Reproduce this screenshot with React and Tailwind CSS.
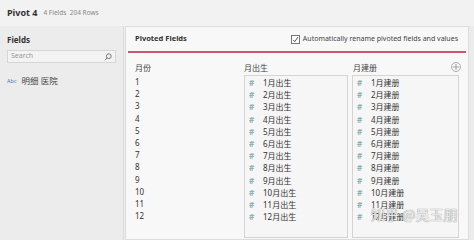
import React from "react";

const months = Array.from({ length: 12 }, (_, i) => i + 1);

function Hash() {
  return (
    <span className="inline-block w-[14px] text-[8px] font-bold text-[#8fb3b4]">#</span>
  );
}

export default function App() {
  return (
    <div
      className="w-[474px] h-[240px] overflow-hidden bg-[#ececec] flex flex-col text-[#333] relative"
      style={{ fontFamily: '"Noto Sans", "Noto Sans CJK SC", sans-serif' }}
    >
      <div className="h-[26px] shrink-0 flex items-center px-[7px] bg-[#f2f2f2] gap-[6px]">
        <span className="text-[9px] font-bold text-[#333]">Pivot 4</span>
        <span className="text-[6.5px] text-[#888]">4 Fields&nbsp;&nbsp;204 Rows</span>
      </div>
      <div className="flex flex-1 min-h-0">
        <div className="w-[124px] shrink-0 border-r border-[#dcdcdc] px-[7px] pt-[8px]">
          <div className="text-[8px] font-bold text-[#333] leading-[12px]">Fields</div>
          <div className="mt-[4px] h-[13px] bg-[#f3f3f3] border border-[#d6d6d6] flex items-center justify-between px-[3px]">
            <span className="text-[7px] text-[#999]">Search</span>
            <svg width="8" height="8" viewBox="0 0 10 10" fill="none" stroke="#666" strokeWidth="1.1">
              <circle cx="6" cy="4" r="3" />
              <path d="M3.8 6.2 L1 9" />
            </svg>
          </div>
          <div className="mt-[12px] flex items-center gap-[5px]">
            <span className="text-[5.5px] text-[#4a7fb5]">Abc</span>
            <span className="text-[8.5px] text-[#444]">明细 医院</span>
          </div>
        </div>
        <div className="flex-1 mr-[5px] ml-[1px] bg-[#f8f8f8] border border-[#dddddd] flex flex-col relative">
          <div className="h-[24px] shrink-0 flex items-center justify-between pl-[9px] pr-[10px]">
            <span className="text-[7.5px] font-bold text-[#333]">Pivoted Fields</span>
            <label className="flex items-center gap-[3px]">
              <span className="w-[9px] h-[9px] border border-[#777] bg-white flex items-center justify-center">
                <svg width="7" height="7" viewBox="0 0 10 10" fill="none" stroke="#444" strokeWidth="1.3">
                  <path d="M1.5 5.5 L4 8 L8.5 1.5" />
                </svg>
              </span>
              <span className="text-[7px] text-[#444]">Automatically rename pivoted fields and values</span>
            </label>
          </div>
          <div className="mx-[2px] h-[2px] bg-[#c65670] shrink-0" />
          <div className="flex flex-1 min-h-0 pl-[9px] pt-[9px] gap-[4px]">
            <div className="w-[105px] flex flex-col">
              <div className="text-[8px] leading-[12px] h-[13px] text-[#444]">月份</div>
              <div className="pt-[1px]">
                {months.map((m) => (
                  <div key={m} className="text-[8px] leading-[12.2px] h-[12.2px] text-[#333]">{m}</div>
                ))}
              </div>
            </div>
            <div className="w-[104px] flex flex-col">
              <div className="text-[8px] leading-[12px] h-[13px] text-[#444]">月出生</div>
              <div className="flex-1 border border-[#d4d4d4] bg-[#f6f6f6] pt-[1px] pl-[4px] mb-[1px]">
                {months.map((m) => (
                  <div key={m} className="flex items-center text-[8px] leading-[12.2px] h-[12.2px] text-[#333]">
                    <Hash />
                    <span>{m}月出生</span>
                  </div>
                ))}
              </div>
            </div>
            <div className="w-[107px] flex flex-col">
              <div className="text-[8px] leading-[12px] h-[13px] text-[#444] pl-[1px]">月建册</div>
              <div className="flex-1 border border-[#d4d4d4] bg-[#f6f6f6] pt-[1px] pl-[4px] mb-[1px]">
                {months.map((m) => (
                  <div key={m} className="flex items-center text-[8px] leading-[12.2px] h-[12.2px] text-[#333]">
                    <Hash />
                    <span>{m}月建册</span>
                  </div>
                ))}
              </div>
            </div>
          </div>
          <div className="absolute right-[7px] top-[35px] w-[10px] h-[10px] rounded-full border border-[#aaa] flex items-center justify-center">
            <svg width="6" height="6" viewBox="0 0 6 6" stroke="#999" strokeWidth="0.9">
              <path d="M3 0 V6 M0 3 H6" />
            </svg>
          </div>
        </div>
      </div>
      <div
        className="absolute left-[371px] top-[204px] text-[14px] leading-[20px] text-[rgba(255,255,255,0.85)] [text-shadow:0_0_1px_rgba(70,70,70,0.9)] whitespace-nowrap"
        style={{ fontFamily: '"Noto Sans CJK SC", sans-serif' }}
      >
        知乎 @吴玉朋
      </div>
    </div>
  );
}
